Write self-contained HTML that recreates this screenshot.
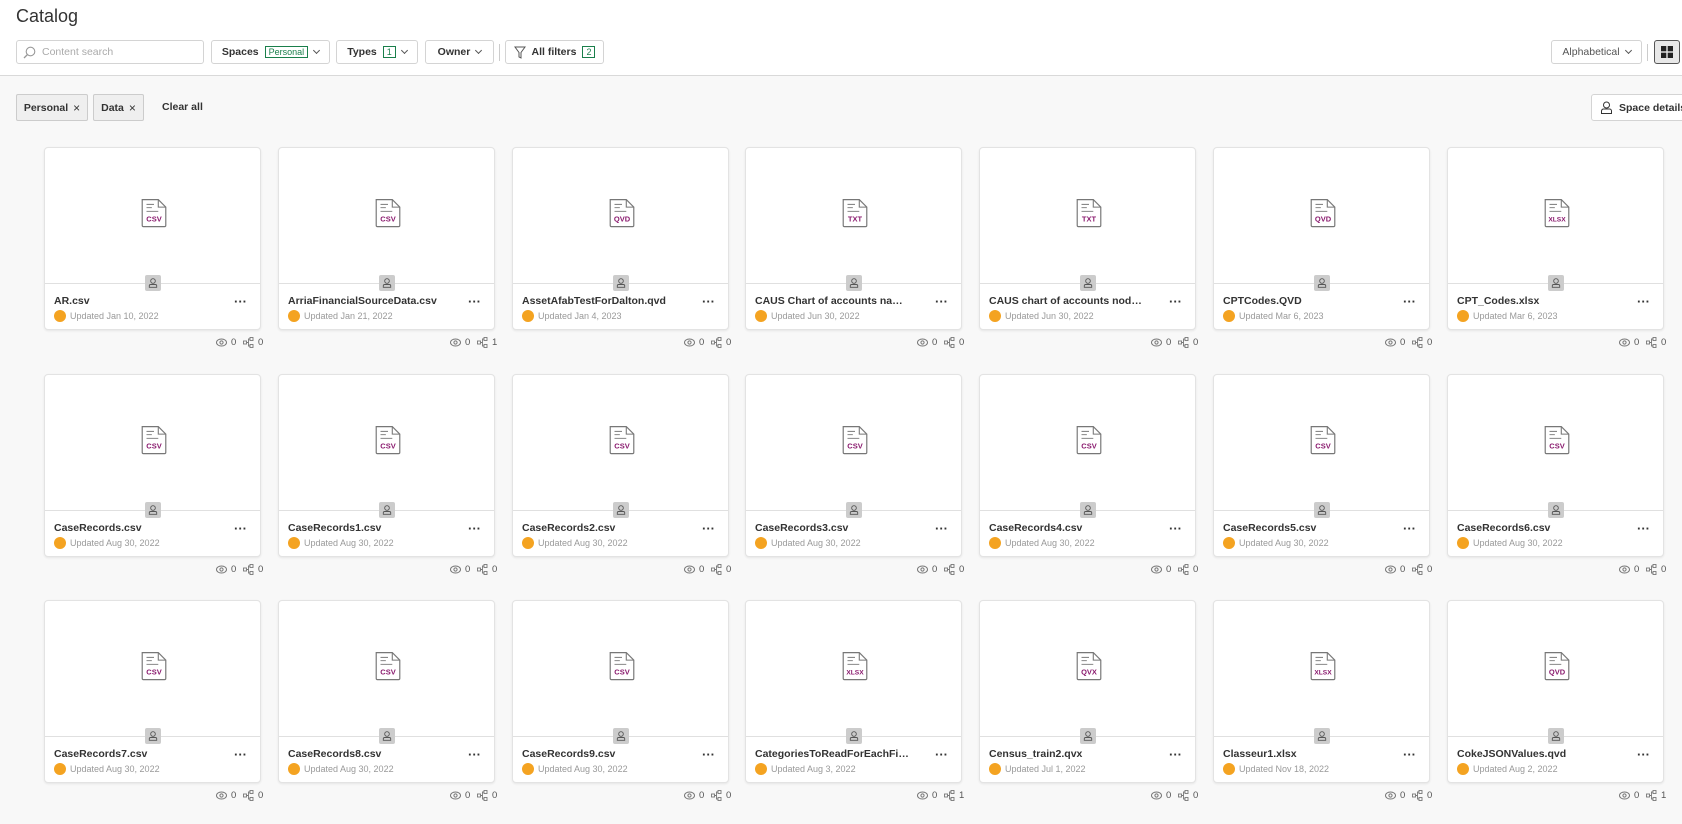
<!DOCTYPE html>
<html><head><meta charset="utf-8"><style>
*{box-sizing:border-box;margin:0;padding:0}
body{width:1682px;height:824px;overflow:hidden;background:#f8f8f8;font-family:"Liberation Sans",sans-serif;color:#404040;position:relative}
.hdr{position:absolute;left:0;top:0;width:1682px;height:76px;background:#fff;border-bottom:1px solid #d9d9d9}
h1{position:absolute;left:16px;top:6px;font-size:18px;font-weight:400;color:#333}
.btn{position:absolute;top:40px;height:24px;border:1px solid #d4d4d4;border-radius:3px;background:#fff;font-size:10.5px;font-weight:bold;color:#333;display:flex;align-items:center;justify-content:center;gap:6px;white-space:nowrap}
.badge{border:1px solid #1a7f4b;color:#1a7f4b;font-weight:normal;font-size:9px;padding:0 3px;line-height:10px}
.chev{width:5px;height:5px;border-right:1.3px solid #555;border-bottom:1.3px solid #555;transform:rotate(45deg);margin-top:-3px}
.chip{position:absolute;top:94px;height:27px;background:#efefef;border:1px solid #ccc;border-radius:2px;font-size:10.5px;font-weight:bold;display:flex;align-items:center;justify-content:center;gap:5px;color:#333}
.card{position:absolute;width:217px;height:183px;background:#fff;border:1px solid #e3e3e3;border-radius:4px;box-shadow:0 1px 2px rgba(0,0,0,.08)}
.card .line{position:absolute;left:0;right:0;top:135px;border-top:1px solid #e0e0e0}
.card .pb{position:absolute;left:100px;top:127px;width:16px;height:16px;background:#ccc;border-radius:2px}
.card .fi{position:absolute;left:94px;top:50px}
.card .nm{position:absolute;left:9px;top:147px;font-size:10.5px;font-weight:bold;color:#333;width:155px;white-space:nowrap;overflow:hidden;text-overflow:ellipsis}
.card .up{position:absolute;left:9px;top:162px;font-size:9px;color:#999;display:flex;align-items:center;gap:4px}
.av{width:12px;height:12px;border-radius:50%;background:#f4a321}
.card .dots{position:absolute;right:13px;top:146px;font-size:13px;font-weight:bold;color:#333}
.st{position:absolute;font-size:9.5px;color:#555;display:flex;gap:4px;align-items:center}
</style></head><body>
<div class="hdr">
<h1>Catalog</h1>
<div class="btn" style="left:16px;width:188px;justify-content:flex-start;padding-left:6px;font-weight:normal;color:#aaa"><svg width="13" height="13" viewBox="0 0 13 13"><circle cx="7.5" cy="5.5" r="4.3" fill="none" stroke="#999" stroke-width="1.1"/><path d="M4.5 8.5L1 12" stroke="#999" stroke-width="1.3"/></svg>Content search</div>
<div class="btn" style="left:211px;width:119px">Spaces <span class="badge">Personal</span> <span class="chev"></span></div>
<div class="btn" style="left:336px;width:82px">Types <span class="badge">1</span> <span class="chev"></span></div>
<div class="btn" style="left:425px;width:69px">Owner <span class="chev"></span></div>
<div style="position:absolute;left:499px;top:44px;width:1px;height:17px;background:#ccc"></div>
<div class="btn" style="left:505px;width:99px"><svg width="12" height="13" viewBox="0 0 12 13"><path d="M1 1h10L7 6.5V12L5 11V6.5Z" fill="none" stroke="#555" stroke-width="1"/></svg>All filters <span class="badge">2</span></div>
<div class="btn" style="left:1551px;width:91px;font-weight:normal;color:#555">Alphabetical <span class="chev"></span></div>
<div style="position:absolute;left:1647px;top:44px;width:1px;height:17px;background:#ccc"></div>
<div class="btn" style="left:1654px;width:26px;background:#e8e8e8;border-color:#555"><svg width="12" height="12" viewBox="0 0 12 12" fill="#222"><rect x="0" y="0" width="5.3" height="5.3"/><rect x="6.7" y="0" width="5.3" height="5.3"/><rect x="0" y="6.7" width="5.3" height="5.3"/><rect x="6.7" y="6.7" width="5.3" height="5.3"/></svg></div>
</div>
<div class="chip" style="left:16px;width:72px">Personal <span style="font-weight:normal;font-size:12px">×</span></div>
<div class="chip" style="left:93px;width:51px">Data <span style="font-weight:normal;font-size:12px">×</span></div>
<div style="position:absolute;left:162px;top:101px;font-size:10.5px;font-weight:bold;color:#333">Clear all</div>
<div class="btn" style="left:1591px;top:94px;width:100px;height:27px;justify-content:flex-start;padding-left:8px"><svg width="13" height="13" viewBox="0 0 13 13"><circle cx="6.5" cy="4" r="3" fill="none" stroke="#333"/><path d="M1.5 12.5v-2.5a2 2 0 0 1 2-2h6a2 2 0 0 1 2 2v2.5z" fill="none" stroke="#333"/></svg>Space details</div>
<div id="g"></div>
<script>
var d=[["AR.csv","CSV","Jan 10, 2022",0,0],["ArriaFinancialSourceData.csv","CSV","Jan 21, 2022",0,1],["AssetAfabTestForDalton.qvd","QVD","Jan 4, 2023",0,0],["CAUS Chart of accounts names.txt","TXT","Jun 30, 2022",0,0],["CAUS chart of accounts nodes.txt","TXT","Jun 30, 2022",0,0],["CPTCodes.QVD","QVD","Mar 6, 2023",0,0],["CPT_Codes.xlsx","XLSX","Mar 6, 2023",0,0],
["CaseRecords.csv","CSV","Aug 30, 2022",0,0],["CaseRecords1.csv","CSV","Aug 30, 2022",0,0],["CaseRecords2.csv","CSV","Aug 30, 2022",0,0],["CaseRecords3.csv","CSV","Aug 30, 2022",0,0],["CaseRecords4.csv","CSV","Aug 30, 2022",0,0],["CaseRecords5.csv","CSV","Aug 30, 2022",0,0],["CaseRecords6.csv","CSV","Aug 30, 2022",0,0],
["CaseRecords7.csv","CSV","Aug 30, 2022",0,0],["CaseRecords8.csv","CSV","Aug 30, 2022",0,0],["CaseRecords9.csv","CSV","Aug 30, 2022",0,0],["CategoriesToReadForEachFile.xlsx","XLSX","Aug 3, 2022",0,1],["Census_train2.qvx","QVX","Jul 1, 2022",0,0],["Classeur1.xlsx","XLSX","Nov 18, 2022",0,0],["CokeJSONValues.qvd","QVD","Aug 2, 2022",0,1]];
var h="";
d.forEach(function(c,i){var col=i%7,row=Math.floor(i/7);var x=Math.round(44+col*233.8),y=147+row*226.7;
h+='<div class="card" style="left:'+x+'px;top:'+y+'px"><svg class="fi" width="30" height="30" viewBox="0 0 28 28"><path d="M3 1.5h15l7 7v17a1.2 1.2 0 0 1-1.2 1.2H4.2A1.2 1.2 0 0 1 3 25.5z" fill="#fff" stroke="#777" stroke-width="1.1"/><path d="M18 1.5v7h7" fill="none" stroke="#777" stroke-width="1"/><path d="M7 6h7M7 9h5M7 12.5h11" stroke="#888" stroke-width="1"/><text x="14" y="22" text-anchor="middle" font-family="Liberation Sans" font-weight="bold" font-size="'+(c[1].length>3?6.2:7)+'" fill="#8a1a6e">'+c[1]+'</text></svg><div class="line"></div><div class="pb"><svg width="16" height="16" viewBox="0 0 16 16"><circle cx="8" cy="6" r="2.3" fill="none" stroke="#555" stroke-width=".9"/><path d="M4.3 12.3v-1.5a1.3 1.3 0 0 1 1.3-1.3h4.8a1.3 1.3 0 0 1 1.3 1.3v1.5z" fill="none" stroke="#555" stroke-width=".9"/></svg></div><div class="nm">'+c[0]+'</div><div class="up"><span class="av"></span>Updated '+c[2]+'</div><div class="dots">···</div></div>';
h+='<div class="st" style="left:'+(x+172)+'px;top:'+(y+190)+'px"><svg width="11" height="11" viewBox="0 0 11 11"><ellipse cx="5.5" cy="5.5" rx="5" ry="3.5" fill="none" stroke="#777"/><circle cx="5.5" cy="5.5" r="1.6" fill="none" stroke="#777"/></svg>'+c[3]+'&nbsp;<svg width="11" height="11" viewBox="0 0 11 11" fill="none" stroke="#777" stroke-width=".9"><rect x=".5" y="4" width="3" height="3"/><rect x="7" y=".5" width="3" height="3"/><rect x="7" y="7.5" width="3" height="3"/><path d="M3.5 5.5h2V2h1.5M5.5 5.5V9h1.5"/></svg>'+c[4]+'</div>';});
document.getElementById("g").innerHTML=h;
</script>
</body></html>
